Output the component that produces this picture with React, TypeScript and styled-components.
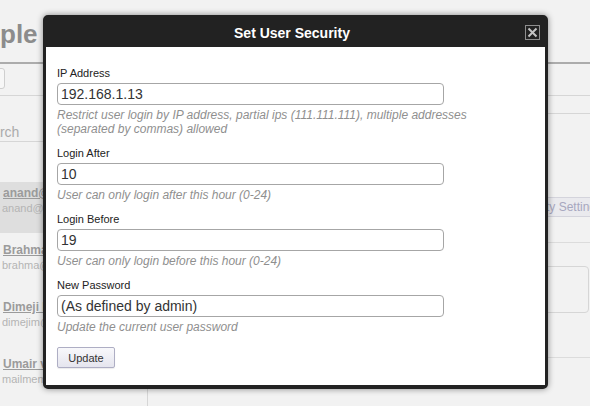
import { createGlobalStyle, styled } from 'styled-components';

const GlobalStyle = createGlobalStyle`
  html, body {
    margin: 0;
    padding: 0;
  }
  body {
    background: #f2f2f2;
    font-family: "Liberation Sans", Arial, sans-serif;
    overflow: hidden;
  }
  * {
    box-sizing: border-box;
  }
`;

const Page = styled.div`
  position: relative;
  width: 590px;
  height: 406px;
  overflow: hidden;
  display: flex;
  flex-direction: column;
  background: #f2f2f2;
`;

const Header = styled.header`
  flex-shrink: 0;
  height: 64px;
  padding-top: 19px;
  border-bottom: 2px solid #acacac;
`;

const PageTitle = styled.h1`
  margin: 0;
  font-size: 26px;
  line-height: 30px;
  font-weight: bold;
  color: #8c8c8c;
  white-space: nowrap;
`;

const Toolbar = styled.div`
  flex-shrink: 0;
  height: 32px;
  padding-top: 4px;
  border-bottom: 1px solid #d6d6d6;
`;

const ToolButton = styled.button`
  display: block;
  width: 39px;
  height: 21px;
  margin-left: -34px;
  border: 1px solid #cfcfcf;
  border-radius: 3px;
  background: #f7f7f7;
  color: #aaa;
  font: 12px "Liberation Sans", Arial, sans-serif;
`;

const Body = styled.div`
  flex: 1;
  display: flex;
  min-height: 0;
`;

const Sidebar = styled.aside`
  width: 148px;
  flex-shrink: 0;
  border-right: 1px solid #d6d6d6;
  display: flex;
  flex-direction: column;
`;

const SearchBox = styled.div`
  height: 46px;
  display: flex;
  align-items: flex-end;
  border-bottom: 1px solid #d6d6d6;
`;

const SearchText = styled.span`
  margin-left: -25px;
  font-size: 14px;
  line-height: 18px;
  color: #ababab;
`;

const UserList = styled.div`
  padding-top: 40px;
  display: flex;
  flex-direction: column;
  gap: 6px;
`;

const UserRow = styled.div<{ $active?: boolean }>`
  height: 51px;
  padding: 3px 3px 0;
  background: ${({ $active }) => ($active ? '#dedede' : 'transparent')};
`;

const UserName = styled.div`
  font-size: 12px;
  line-height: 16px;
  font-weight: bold;
  color: #9b9b9b;
  text-decoration: underline;
  white-space: nowrap;
`;

const UserEmail = styled.div`
  margin-left: -1px;
  font-size: 11px;
  line-height: 14px;
  color: #b4b4b4;
  white-space: nowrap;
`;

const Main = styled.main`
  flex: 1;
  display: flex;
  flex-direction: column;
`;

const TabsRow = styled.div`
  height: 18px;
  border-bottom: 1px solid #d6d6d6;
`;

const ActionSection = styled.div`
  height: 129px;
  padding: 83px 0 0 355px;
  border-bottom: 1px solid #dcdcdc;
`;

const ActionButton = styled.button`
  height: 20px;
  padding: 0 8px;
  border: 1px solid #d4d4dc;
  border-radius: 3px;
  background: #eaeaee;
  color: #a7a7bf;
  font: 12px/18px "Liberation Sans", Arial, sans-serif;
  white-space: nowrap;
`;

const BoxSection = styled.div`
  height: 115px;
  padding: 23px 22px 0 20px;
  border-bottom: 1px solid #dcdcdc;
`;

const InfoBox = styled.div`
  height: 47px;
  border: 1px solid #d6d6d6;
  border-radius: 4px;
`;

/* modal */

const Dialog = styled.div`
  position: absolute;
  left: 43px;
  top: 15px;
  width: 505px;
  height: 374px;
  display: flex;
  flex-direction: column;
  background: #222;
  border: 3px solid #222;
  border-bottom-width: 4px;
  border-radius: 5px;
  box-shadow: 0 0 6px rgba(0, 0, 0, 0.45);
`;

const TitleBar = styled.div`
  position: relative;
  height: 29px;
  flex-shrink: 0;
  display: flex;
  align-items: center;
  justify-content: center;
  padding-right: 7px;
  color: #fff;
  font-size: 14px;
  font-weight: bold;
`;

const CloseButton = styled.button`
  position: absolute;
  right: 5px;
  top: 7px;
  width: 15px;
  height: 15px;
  padding: 0;
  border: 1px solid #8e8e8e;
  background: transparent;
  display: flex;
  align-items: center;
  justify-content: center;
`;

const DialogBody = styled.form`
  flex: 1;
  background: #fff;
  padding: 19px 11px 17px;
`;

const Field = styled.div`
  display: flex;
  flex-direction: column;
  align-items: flex-start;
`;

const Label = styled.label`
  font-size: 11px;
  line-height: 15px;
  color: #222;
  margin-bottom: 2px;
`;

const TextInput = styled.input`
  width: 387px;
  height: 22px;
  padding: 0 3px;
  border: 1px solid #a6a6a6;
  border-radius: 4px;
  font: 14px "Liberation Sans", Arial, sans-serif;
  color: #333;
  background: #fff;
`;

const Help = styled.p`
  max-width: 470px;
  margin: 3px 0 10px;
  font-size: 12px;
  line-height: 14px;
  font-style: italic;
  color: #8f8f8f;
`;

const SubmitButton = styled.button`
  margin-top: 3px;
  width: 58px;
  height: 21px;
  padding: 0;
  border: 1px solid #aeaec4;
  border-radius: 2px;
  background: linear-gradient(#f8f8fb, #e5e5ee);
  box-shadow: 0 1px 1px rgba(0, 0, 0, 0.08);
  font: 11px "Liberation Sans", Arial, sans-serif;
  color: #333;
`;

const users = [
  { name: 'anand@mailmeme.com', email: 'anand@mailmeme.com', active: true },
  { name: 'Brahma Reddy', email: 'brahma@mailmeme.com' },
  { name: 'Dimeji Mudele', email: 'dimejim@mailmeme.com' },
  { name: 'Umair vohra', email: 'mailmeme@gmail.com' },
];

const fields = [
  {
    label: 'IP Address',
    value: '192.168.1.13',
    help: 'Restrict user login by IP address, partial ips (111.111.111), multiple addresses (separated by commas) allowed',
  },
  { label: 'Login After', value: '10', help: 'User can only login after this hour (0-24)' },
  { label: 'Login Before', value: '19', help: 'User can only login before this hour (0-24)' },
  { label: 'New Password', value: '(As defined by admin)', help: 'Update the current user password' },
];

const CloseIcon = () => (
  <svg width="13" height="13" viewBox="0 0 13 13">
    <path d="M2.5 2.5 L10.5 10.5 M10.5 2.5 L2.5 10.5" stroke="#c4c4c4" strokeWidth="2" />
  </svg>
);

export default function App() {
  return (
    <>
      <GlobalStyle />
      <Page>
        <Header>
          <PageTitle>ple</PageTitle>
        </Header>
        <Toolbar>
          <ToolButton>New</ToolButton>
        </Toolbar>
        <Body>
          <Sidebar>
            <SearchBox>
              <SearchText>Search</SearchText>
            </SearchBox>
            <UserList>
              {users.map((u) => (
                <UserRow key={u.email} $active={u.active}>
                  <UserName>{u.name}</UserName>
                  <UserEmail>{u.email}</UserEmail>
                </UserRow>
              ))}
            </UserList>
          </Sidebar>
          <Main>
            <TabsRow />
            <ActionSection>
              <ActionButton>Security Settings</ActionButton>
            </ActionSection>
            <BoxSection>
              <InfoBox />
            </BoxSection>
          </Main>
        </Body>

        <Dialog>
          <TitleBar>
            Set User Security
            <CloseButton type="button">
              <CloseIcon />
            </CloseButton>
          </TitleBar>
          <DialogBody onSubmit={(e) => e.preventDefault()}>
            {fields.map((f) => (
              <Field key={f.label}>
                <Label>{f.label}</Label>
                <TextInput defaultValue={f.value} />
                <Help>{f.help}</Help>
              </Field>
            ))}
            <SubmitButton type="submit">Update</SubmitButton>
          </DialogBody>
        </Dialog>
      </Page>
    </>
  );
}
